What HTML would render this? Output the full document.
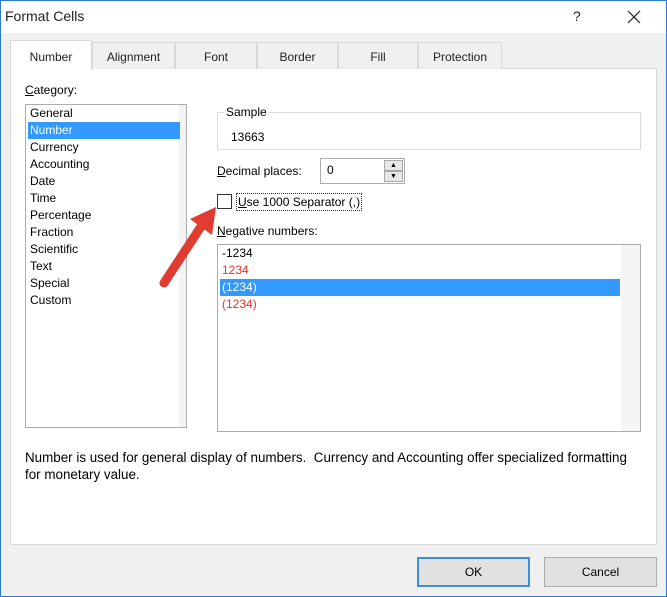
<!DOCTYPE html><html><head><style>
*{margin:0;padding:0;box-sizing:border-box}
body{width:667px;height:597px;font-family:"Liberation Sans",sans-serif;font-size:12px;color:#000;background:#f0f0f0;position:relative;overflow:hidden}
.a{position:absolute}
.win{left:0;top:0;width:667px;height:597px;border:1px solid #2b79d0;}
.tab{top:42px;height:27px;border:1px solid #d9d9d9;border-bottom:none;background:#f0f0f0;text-align:center;line-height:28px;font-size:12px;color:#222}
.li{left:2px;height:17px;line-height:17px;padding-left:2px;font-size:12px}
</style></head><body>
<div class="a win"></div>
<div class="a" style="left:1px;top:1px;width:665px;height:32px;background:#fff"></div>
<div class="a" style="left:5px;top:8px;font-size:14px;color:#222">Format Cells</div>
<div class="a" style="left:573px;top:8px;font-size:14px;color:#222">?</div>
<svg class="a" style="left:627px;top:10px" width="14" height="14"><path d="M1 1L13 13M13 1L1 13" stroke="#222" stroke-width="1.2"/></svg>
<div class="a" style="left:10px;top:68px;width:647px;height:477px;background:#fff;border:1px solid #d9d9d9"></div>
<div class="a tab" style="left:92px;width:83px">Alignment</div>
<div class="a tab" style="left:175px;width:82px">Font</div>
<div class="a tab" style="left:257px;width:81px">Border</div>
<div class="a tab" style="left:338px;width:80px">Fill</div>
<div class="a tab" style="left:418px;width:84px">Protection</div>
<div class="a tab" style="left:10px;top:40px;width:82px;height:30px;background:#fff;line-height:32px">Number</div>
<div class="a" style="left:25px;top:83px;font-size:12px"><u>C</u>ategory:</div>
<div class="a" style="left:25px;top:104px;width:162px;height:324px;border:1px solid #adadad;background:#fff">
<div class="a" style="left:153px;top:0;width:7px;height:322px;background:#f3f3f3"></div>
<div class="a li" style="top:0">General</div>
<div class="a li" style="top:17px;width:152px;background:#3399ff;color:#fff">Number</div>
<div class="a li" style="top:34px">Currency</div>
<div class="a li" style="top:51px">Accounting</div>
<div class="a li" style="top:68px">Date</div>
<div class="a li" style="top:85px">Time</div>
<div class="a li" style="top:102px">Percentage</div>
<div class="a li" style="top:119px">Fraction</div>
<div class="a li" style="top:136px">Scientific</div>
<div class="a li" style="top:153px">Text</div>
<div class="a li" style="top:170px">Special</div>
<div class="a li" style="top:187px">Custom</div>
</div>
<div class="a" style="left:217px;top:112px;width:424px;height:38px;border:1px solid #dcdcdc"></div>
<div class="a" style="left:224px;top:105px;background:#fff;padding:0 2px;font-size:12px">Sample</div>
<div class="a" style="left:231px;top:130px;font-size:12px">13663</div>
<div class="a" style="left:217px;top:164px;font-size:12px"><u>D</u>ecimal places:</div>
<div class="a" style="left:320px;top:158px;width:85px;height:26px;border:1px solid #adadad;background:#fff"><span class="a" style="left:6px;top:4px;font-size:12px">0</span></div>
<div class="a" style="left:384px;top:160px;width:19px;height:11px;background:#e8e8e8;border:1px solid #aaa;font-size:7px;text-align:center;line-height:9px">▲</div>
<div class="a" style="left:384px;top:171px;width:19px;height:11px;background:#e8e8e8;border:1px solid #aaa;font-size:7px;text-align:center;line-height:9px">▼</div>
<div class="a" style="left:217px;top:194px;width:15px;height:15px;border:1px solid #333;background:#fff"></div>
<div class="a" style="left:236px;top:193px;border:1px dotted #333;padding:0 1px;height:18px;line-height:16px;font-size:12px"><u>U</u>se 1000 Separator (,)</div>
<div class="a" style="left:217px;top:224px;font-size:12px"><u>N</u>egative numbers:</div>
<div class="a" style="left:217px;top:244px;width:424px;height:188px;border:1px solid #adadad;background:#fff">
<div class="a" style="left:403px;top:0;width:19px;height:186px;background:#f5f5f5"></div>
<div class="a li" style="top:0">-1234</div>
<div class="a li" style="top:17px;color:#e8332e">1234</div>
<div class="a li" style="top:34px;width:400px;background:#3399ff;color:#fff">(1234)</div>
<div class="a li" style="top:51px;color:#e8332e">(1234)</div>
</div>
<svg class="a" style="left:150px;top:195px" width="75" height="100"><line x1="14" y1="88" x2="52" y2="30" stroke="#e03c31" stroke-width="9" stroke-linecap="round"/><polygon points="66,12 40,24 62,40" fill="#e03c31"/></svg>
<div class="a" style="left:25px;top:449px;font-size:13.4px;line-height:17px;width:640px;white-space:nowrap">Number is used for general display of numbers.&nbsp; Currency and Accounting offer specialized formatting<br>for monetary value.</div>
<div class="a" style="left:417px;top:557px;width:113px;height:30px;border:2px solid #3c8fdc;background:#e1e1e1;text-align:center;line-height:26px;font-size:12px">OK</div>
<div class="a" style="left:544px;top:557px;width:113px;height:30px;border:1px solid #adadad;background:#e1e1e1;text-align:center;line-height:28px;font-size:12px">Cancel</div>
</body></html>
